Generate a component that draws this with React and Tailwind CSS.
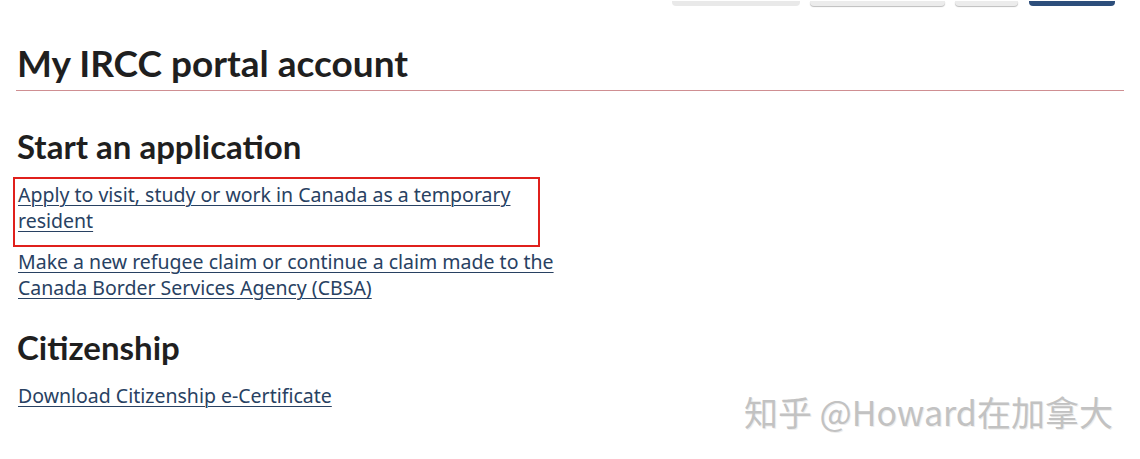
export default function App() {
  return (
    <div className="relative w-[1140px] h-[459px] bg-white overflow-hidden">
      <div className="flex h-[6px] items-end">
        <div className="ml-[672px] w-[128px] h-[5px] rounded-b-[4px] bg-[#e9e9e9]" />
        <div className="ml-[10px] w-[135px] h-[5px] rounded-b-[4px] bg-[#ececec] shadow-[0_1px_1px_#bdbdbd]" />
        <div className="ml-[10px] w-[63px] h-[5px] rounded-b-[4px] bg-[#ececec] shadow-[0_1px_1px_#bdbdbd]" />
        <div className="ml-[11px] w-[86px] h-[5px] rounded-b-[4px] bg-[#2d4e7b]" />
      </div>
      <div className="pl-[16px] pr-[16px]">
        <h1 className="mt-[33px] text-[37px] leading-[48px] font-bold text-[#1f1f1f] pl-[1px]" style={{ fontFamily: "Lato, 'Noto Sans', sans-serif" }}>
          My IRCC portal account
        </h1>
        <div className="mt-[3px] h-px bg-[#cf8f92]" />
        <h2 className="mt-[34px] text-[33px] leading-[42px] font-bold text-[#1f1f1f] pl-[1px]" style={{ fontFamily: "Lato, 'Noto Sans', sans-serif" }}>
          Start an application
        </h2>
        <div className="w-[545px]" style={{ fontFamily: "'Noto Sans', sans-serif" }}>
          <div className="mt-[10px] -ml-[3px] border-2 border-[#e0201c] pl-[3px] pt-[3px] pb-[11px] w-[527px]">
            <a className="text-[19.5px] leading-[26px] text-[#284162] underline underline-offset-[3px] decoration-1 block w-[520px]">
              Apply to visit, study or work in Canada as a temporary resident
            </a>
          </div>
          <a className="block mt-[2px] pl-[2px] text-[19.5px] leading-[26px] text-[#284162] underline underline-offset-[3px] decoration-1">
            Make a new refugee claim or continue a claim made to the Canada Border Services Agency (CBSA)
          </a>
        </div>
        <h2 className="mt-[25px] text-[33px] leading-[42px] font-bold text-[#1f1f1f] pl-[1px]" style={{ fontFamily: "Lato, 'Noto Sans', sans-serif" }}>
          Citizenship
        </h2>
        <a className="block mt-[15px] pl-[2px] text-[19.5px] leading-[26px] text-[#284162] underline underline-offset-[3px] decoration-1" style={{ fontFamily: "'Noto Sans', sans-serif" }}>
          Download Citizenship e-Certificate
        </a>
      </div>
      <div className="absolute left-[744px] top-[391px] text-[34px] leading-[42px] text-[#c2c2c2] [text-shadow:1px_1px_0_#ededed]" style={{ fontFamily: "'Noto Sans CJK SC', 'Noto Sans', sans-serif" }}>
        知乎 @Howard在加拿大
      </div>
    </div>
  );
}
